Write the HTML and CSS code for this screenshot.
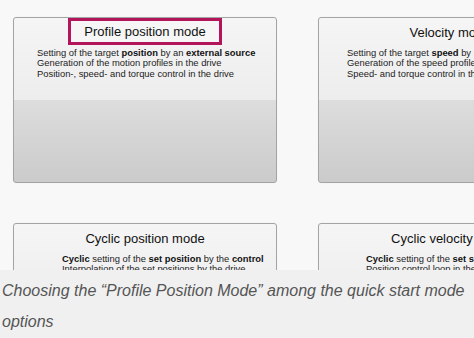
FILE: index.html
```html
<!DOCTYPE html>
<html>
<head>
<meta charset="utf-8">
<link rel="stylesheet" href="styles.css">
</head>
<body>
<div class="page">
  <div class="grid">
    <div class="card">
      <div class="title"><span class="hl">Profile position mode</span></div>
      <div class="desc d1">
        <div>Setting of the target <b>position</b> by an <b>external source</b></div>
        <div>Generation of the motion profiles in the drive</div>
        <div>Position-, speed- and torque control in the drive</div>
      </div>
    </div>
    <div class="card">
      <div class="title"><span>Velocity mode</span></div>
      <div class="desc d2">
        <div>Setting of the target <b>speed</b> by an <b>external source</b></div>
        <div>Generation of the speed profiles in the drive</div>
        <div>Speed- and torque control in the drive</div>
      </div>
    </div>
    <div class="card">
      <div class="title"><span>Cyclic position mode</span></div>
      <div class="desc d3">
        <div><b>Cyclic</b> setting of the <b>set position</b> by the <b>control</b></div>
        <div>Interpolation of the set positions by the drive</div>
        <div>Position-, speed- and torque control in the drive</div>
      </div>
    </div>
    <div class="card">
      <div class="title"><span>Cyclic velocity mode</span></div>
      <div class="desc d4">
        <div><b>Cyclic</b> setting of the <b>set speed</b> by the <b>control</b></div>
        <div>Position control loop in the control</div>
        <div>Speed- and torque control in the drive</div>
      </div>
    </div>
  </div>
  <div class="caption">Choosing the “Profile Position Mode” among the quick start mode options</div>
</div>
</body>
</html>
```
FILE: styles.css
```css
html, body {
  margin: 0;
  padding: 0;
  background: #f8f8f8;
}
.page {
  position: relative;
  width: 474px;
  height: 338px;
  overflow: hidden;
  background: #f8f8f8;
}
.grid {
  display: grid;
  grid-template-columns: 264px 264px;
  grid-auto-rows: 166px;
  column-gap: 41px;
  row-gap: 40px;
  padding: 17px 0 0 13px;
  width: 600px;
}
.card {
  box-sizing: border-box;
  border: 1px solid #a4a4a4;
  border-radius: 3px;
  background: linear-gradient(to bottom, #f5f5f5 0%, #ededed 50%, #dddddd 50%, #cbcbcb 100%);
  box-shadow: 0 0 1px rgba(0,0,0,0.08);
  font-family: "Liberation Sans", Arial, sans-serif;
  color: #1a1a1a;
}
.title {
  display: flex;
  justify-content: center;
  height: 28px;
  font-size: 13px;
  line-height: 30px;
  color: #111;
}
.title .hl {
  box-sizing: border-box;
  width: 154px;
  height: 27px;
  padding-top: 1px;
  line-height: 20px;
  text-align: center;
  border: 3px solid #b3155a;
  background: #f6f6f6;
}
.desc {
  margin-top: 1.5px;
  font-size: 9.4px;
  line-height: 10.5px;
  color: #1c1c1c;
  white-space: nowrap;
}
.desc b { color: #111; }
.d1 { padding-left: 23px; }
.d2 { padding-left: 28px; }
.d3 { padding-left: 48px; }
.d4 { padding-left: 47px; }
.caption {
  position: absolute;
  left: 0;
  top: 270px;
  width: 474px;
  height: 68px;
  box-sizing: border-box;
  padding: 5px 0 0 2px;
  background: #f0f0f0;
  font-family: "Liberation Sans", Arial, sans-serif;
  font-style: italic;
  font-size: 16px;
  line-height: 31px;
  color: #555;
}
```
